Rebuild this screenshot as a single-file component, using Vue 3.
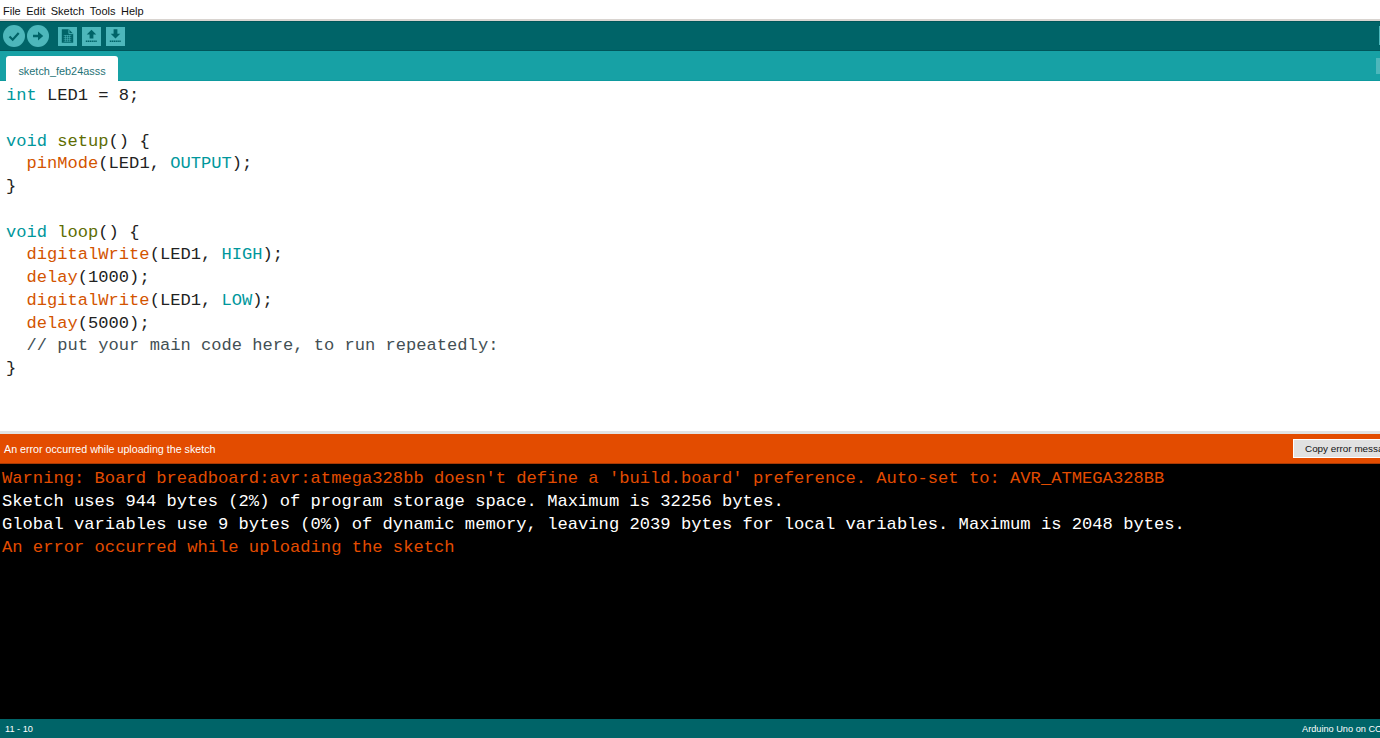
<script setup>
const kw = 'kw'
const fn = 'fn'
const st = 'st'
const cm = 'cm'
const code = [
  [[kw, 'int'], ['', ' LED1 = 8;']],
  [],
  [[kw, 'void'], ['', ' '], [st, 'setup'], ['', '() {']],
  [['', '  '], [fn, 'pinMode'], ['', '(LED1, '], [kw, 'OUTPUT'], ['', ');']],
  [['', '}']],
  [],
  [[kw, 'void'], ['', ' '], [st, 'loop'], ['', '() {']],
  [['', '  '], [fn, 'digitalWrite'], ['', '(LED1, '], [kw, 'HIGH'], ['', ');']],
  [['', '  '], [fn, 'delay'], ['', '(1000);']],
  [['', '  '], [fn, 'digitalWrite'], ['', '(LED1, '], [kw, 'LOW'], ['', ');']],
  [['', '  '], [fn, 'delay'], ['', '(5000);']],
  [['', '  '], [cm, '// put your main code here, to run repeatedly:']],
  [['', '}']],
]
const menus = ['File', 'Edit', 'Sketch', 'Tools', 'Help']
const consoleLines = [
  { t: "Warning: Board breadboard:avr:atmega328bb doesn't define a 'build.board' preference. Auto-set to: AVR_ATMEGA328BB", err: true },
  { t: 'Sketch uses 944 bytes (2%) of program storage space. Maximum is 32256 bytes.', err: false },
  { t: 'Global variables use 9 bytes (0%) of dynamic memory, leaving 2039 bytes for local variables. Maximum is 2048 bytes.', err: false },
  { t: 'An error occurred while uploading the sketch', err: true },
]
</script>

<template>
  <div class="ide">
    <nav class="menubar">
      <span v-for="m in menus" :key="m">{{ m }}</span>
    </nav>
    <div class="toolbar">
      <button class="round" aria-label="Verify">
        <svg width="22" height="22" viewBox="0 0 22 22"><path d="M6.500 11.500l3.200 3.200 6-6.600" fill="none" stroke="#006468" stroke-width="2.200"/></svg>
      </button>
      <button class="round" aria-label="Upload">
        <svg width="22" height="22" viewBox="0 0 22 22"><path d="M6 9.700h5V6.400l5.200 4.600-5.200 4.600v-3.300H6z" fill="#006468"/></svg>
      </button>
      <button class="square first" aria-label="New">
        <svg width="20" height="20" viewBox="0 0 20 20"><path d="M4 3h7.500L16 7.500V17H4z" fill="#006468"/><path d="M11.500 3v4.500H16" fill="none" stroke="#4db7bb" stroke-width="1"/><path d="M6 9.500h8M6 11.500h8M6 13.500h8M6 15.500h8M8 9v7M10 9v7M12 9v7" stroke="#4db7bb" stroke-width=".6"/></svg>
      </button>
      <button class="square" aria-label="Open">
        <svg width="20" height="20" viewBox="0 0 20 20"><path d="M10 3.500l5 5h-3v4H8v-4H5z" fill="#006468"/><path d="M4 15.500h12" stroke="#006468" stroke-width="1.500" stroke-dasharray="1.500 .5"/></svg>
      </button>
      <button class="square" aria-label="Save">
        <svg width="20" height="20" viewBox="0 0 20 20"><path d="M8 3h4v4.500h3l-5 5-5-5h3z" fill="#006468"/><path d="M4 15.500h12" stroke="#006468" stroke-width="1.500" stroke-dasharray="1.500 .5"/></svg>
      </button>
      <span class="edge-btn top"></span>
    </div>
    <div class="tabs">
      <div class="tab">sketch_feb24asss</div>
      <span class="edge-btn tabedge"></span>
    </div>
    <main class="editor">
      <div v-for="(line, i) in code" :key="i" class="line"><span v-for="(s, j) in line" :key="j" :class="s[0]">{{ s[1] }}</span></div>
    </main>
    <div class="errorbar">
      <span>An error occurred while uploading the sketch</span>
      <button class="copy">Copy error messages</button>
    </div>
    <section class="console">
      <div v-for="(l, i) in consoleLines" :key="i" :class="{ err: l.err }">{{ l.t }}</div>
    </section>
    <footer class="status">
      <span>11 - 10</span>
      <span class="board">Arduino Uno on COM3</span>
    </footer>
  </div>
</template>

<style scoped>
.ide {
  width: 1380px;
  height: 738px;
  display: flex;
  flex-direction: column;
  overflow: hidden;
  background: #fff;
  font-family: "Liberation Sans", Arial, sans-serif;
}
.menubar {
  height: 19px;
  display: flex;
  gap: 5.500px;
  padding: 4px 0 0 3px;
  box-sizing: border-box;
  font-size: 11px;
  line-height: 15px;
  color: #111;
  flex: none;
}
.toolbar {
  height: 32px;
  flex: none;
  box-sizing: border-box;
  border-top: 2px solid #d9d4d0;
  border-bottom: 1px solid #00565a;
  box-shadow: inset 0 1px 0 #00565a;
  background: #006468;
  display: flex;
  align-items: center;
  padding: 1px 0 0 3px;
  position: relative;
}
.toolbar button {
  border: 0;
  padding: 0;
  background: #4db7bb;
  display: flex;
  align-items: center;
  justify-content: center;
}
.round {
  width: 22px;
  height: 22px;
  border-radius: 50%;
  margin-right: 2px;
}
.square {
  width: 19px;
  height: 19px;
  margin-left: 5px;
}
.square.first {
  margin-left: 7px;
}
.tabs {
  height: 30px;
  flex: none;
  box-sizing: border-box;
  background: #17a1a5;
  border-bottom: 1px solid #0e9a9e;
  padding: 5px 0 0 6px;
  position: relative;
}
.tab {
  width: 112px;
  height: 25px;
  background: #fff;
  border-radius: 3px 3px 0 0;
  color: #1f7276;
  font-size: 10.900px;
  line-height: 30px;
  text-align: center;
  box-sizing: border-box;
}
.edge-btn {
  position: absolute;
  right: 0;
  width: 1px;
  background: #4db7bb;
}
.edge-btn.top {
  top: 5px;
  height: 19px;
}
.edge-btn.tabedge {
  top: 7px;
  width: 4px;
  height: 16px;
}
.editor {
  flex: none;
  height: 353px;
  box-sizing: border-box;
  padding: 4px 0 0 6px;
  font-family: "Liberation Mono", monospace;
  font-size: 17.100px;
  color: #222;
  border-bottom: 3px solid #e2e4e4;
}
.line {
  height: 22.750px;
  line-height: 22.750px;
  white-space: pre;
}
.kw { color: #00979c; }
.st { color: #5e6d03; }
.fn { color: #d35400; }
.cm { color: #434f54; }
.errorbar {
  flex: none;
  height: 30px;
  box-sizing: border-box;
  background: #e34c00;
  border-bottom: 1px solid #a83a05;
  display: flex;
  align-items: center;
  justify-content: space-between;
  padding: 0 0 0 4px;
  color: #fff;
  font-size: 10.700px;
  overflow: hidden;
}
.copy {
  flex: none;
  width: 120px;
  height: 19px;
  margin: 0 -33px 0 0;
  padding: 0 0 0 11px;
  text-align: left;
  white-space: nowrap;
  background: #e1e1e1;
  border: 1px solid #fff;
  box-sizing: border-box;
  font-family: "Liberation Sans", Arial, sans-serif;
  font-size: 9.900px;
  color: #111;
}
.console {
  flex: 1;
  min-height: 0;
  background: #000;
  color: #fff;
  padding: 3px 0 0 2px;
  font-family: "Liberation Mono", monospace;
  font-size: 17.150px;
  line-height: 23px;
  white-space: pre;
}
.err { color: #e34c00; }
.status {
  flex: none;
  height: 19px;
  background: #006468;
  color: #fff;
  display: flex;
  justify-content: space-between;
  align-items: center;
  padding: 0 0 0 5px;
  font-size: 9.200px;
  overflow: hidden;
}
.board {
  flex: none;
  width: 78px;
  white-space: nowrap;
}
</style>
